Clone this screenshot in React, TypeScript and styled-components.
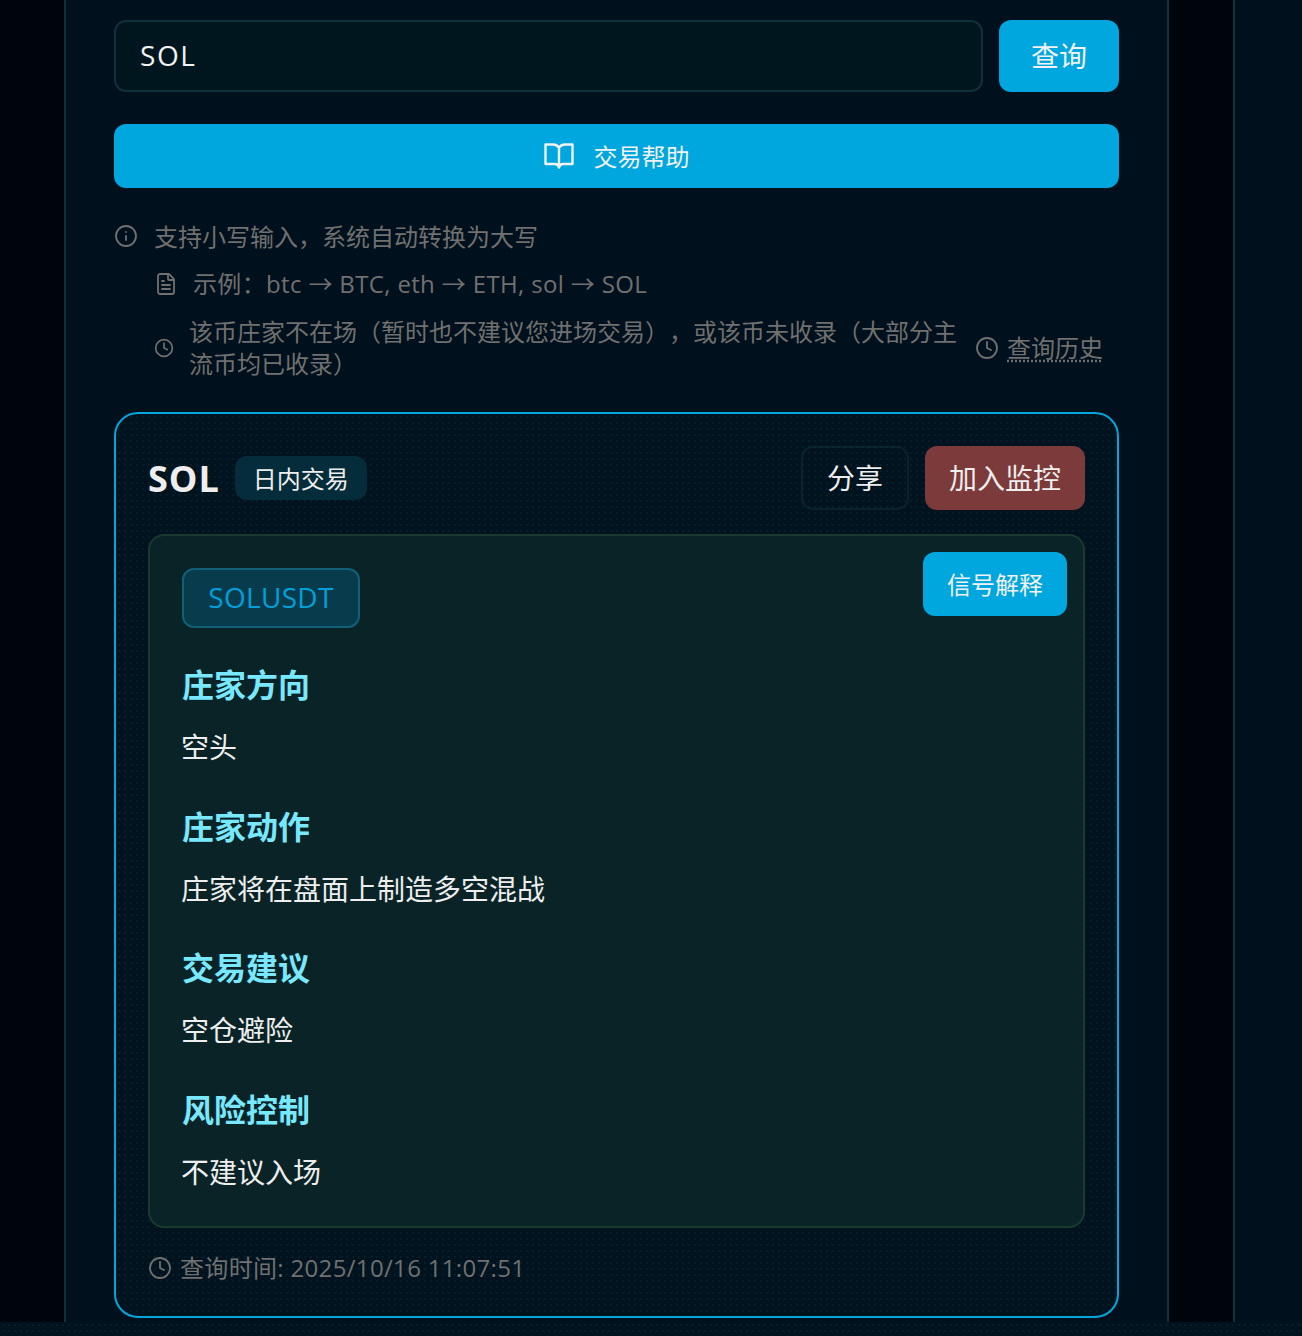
import React from "react";
import styled, { createGlobalStyle } from "styled-components";
import { Clock, FileText, Info } from "lucide-react";

const sections = [
    { title: "庄家方向", text: "空头" },
    { title: "庄家动作", text: "庄家将在盘面上制造多空混战" },
    { title: "交易建议", text: "空仓避险" },
    { title: "风险控制", text: "不建议入场" },
];

const App = () => {
    return (
        <Page>
            <GlobalStyle />
            <Columns>
                <Gutter />
                <Main>
                    <SearchRow>
                        <SearchInput value="SOL" readOnly />
                        <SearchButton>查询</SearchButton>
                    </SearchRow>
                    <HelpButton>
                        <svg width="30" height="26" viewBox="0 0 30 26" fill="none" stroke="currentColor" strokeWidth="2.4" strokeLinejoin="round">
                            <path d="M15 4.5C13.5 2.5 11.5 1.5 9 1.5H1.5V21H11C13 21 14.5 22 15 24.5C15.5 22 17 21 19 21H28.5V1.5H21C18.5 1.5 16.5 2.5 15 4.5ZM15 4.5V24.5" />
                        </svg>
                        <span>交易帮助</span>
                    </HelpButton>
                    <Notes>
                        <FirstNote>
                            <Info size={24} strokeWidth={1.8} />
                            <span>支持小写输入，系统自动转换为大写</span>
                        </FirstNote>
                        <ExampleNote>
                            <FileText size={24} strokeWidth={1.8} />
                            <ExampleText>示例：btc → BTC, eth → ETH, sol → SOL</ExampleText>
                        </ExampleNote>
                        <StatusNote>
                            <Clock size={20} strokeWidth={2} />
                            <StatusText>
                                该币庄家不在场（暂时也不建议您进场交易），或该币未收录（大部分主流币均已收录）
                            </StatusText>
                            <HistoryLink>
                                <Clock size={24} strokeWidth={1.8} />
                                <span>查询历史</span>
                            </HistoryLink>
                        </StatusNote>
                    </Notes>
                    <ResultCard>
                        <CardHeader>
                            <CoinName>SOL</CoinName>
                            <ModeTag>日内交易</ModeTag>
                            <HeaderActions>
                                <ShareButton>分享</ShareButton>
                                <WatchButton>加入监控</WatchButton>
                            </HeaderActions>
                        </CardHeader>
                        <SignalBox>
                            <ExplainButton>信号解释</ExplainButton>
                            <PairTag>SOLUSDT</PairTag>
                            {sections.map((section) => (
                                <Section key={section.title}>
                                    <SectionTitle>{section.title}</SectionTitle>
                                    <SectionText>{section.text}</SectionText>
                                </Section>
                            ))}
                        </SignalBox>
                        <QueryTime>
                            <Clock size={24} strokeWidth={1.8} />
                            <span>查询时间: 2025/10/16 11:07:51</span>
                        </QueryTime>
                    </ResultCard>
                </Main>
                <Gutter />
                <SidePanel />
            </Columns>
            <Footer />
        </Page>
    );
};

const GlobalStyle = createGlobalStyle`
    html, body {
        margin: 0;
        padding: 0;
        background: #00101c;
    }
    * {
        box-sizing: border-box;
    }
    body, button, input {
        font-family: "Open Sans", "Noto Sans CJK SC", sans-serif;
        text-spacing-trim: space-all;
    }
`;

const dots = `radial-gradient(circle, rgba(40, 100, 110, 0.13) 0.8px, transparent 1px)`;

const Page = styled.div`
    width: 1302px;
    height: 1336px;
    overflow: hidden;
    display: flex;
    flex-direction: column;
`;

const Columns = styled.div`
    height: 1322px;
    display: flex;
    overflow: hidden;
`;

const Gutter = styled.div`
    width: 64px;
    flex: none;
    background: #00040b;
`;

const Main = styled.main`
    width: 1105px;
    flex: none;
    padding: 20px 48px 0;
    background: #00101c;
    border-left: 2px solid #12303c;
    border-right: 2px solid #12303c;
`;

const SidePanel = styled.div`
    flex: 1;
    background: #00101c;
    border-left: 2px solid #12303c;
`;

const Footer = styled.div`
    height: 14px;
    background-color: #00131e;
    background-image: ${dots};
    background-size: 6px 6px;
`;

const SearchRow = styled.div`
    display: flex;
    gap: 16px;
    height: 72px;
`;

const SearchInput = styled.input`
    flex: 1;
    min-width: 0;
    padding: 0 24px 2px;
    background: #00161f;
    border: 2px solid #12303c;
    border-radius: 12px;
    color: #f2f2f2;
    font-size: 28px;
    letter-spacing: 1.6px;
    outline: none;
`;

const BlueButton = styled.button`
    border: none;
    background: #00a6de;
    color: #f2f2f2;
    border-radius: 12px;
    padding: 0 0 2px;
`;

const SearchButton = styled(BlueButton)`
    width: 120px;
    font-size: 28px;
`;

const HelpButton = styled(BlueButton)`
    width: 100%;
    height: 64px;
    margin-top: 32px;
    display: flex;
    align-items: center;
    justify-content: center;
    gap: 20px;
    font-size: 24px;

    svg {
        margin-top: 2px;
    }
`;

const Notes = styled.div`
    margin-top: 32px;
    color: #707070;
    font-size: 24px;
    line-height: 32px;
`;

const NoteRow = styled.div`
    display: flex;
    align-items: center;
`;

const FirstNote = styled(NoteRow)`
    height: 32px;
    gap: 16px;

    span {
        padding-top: 1px;
    }
`;

const ExampleNote = styled(NoteRow)`
    height: 32px;
    margin-top: 16px;
    padding-left: 40px;
    gap: 15px;
`;

const ExampleText = styled.span`
    letter-spacing: 0.35px;
`;

const StatusNote = styled(NoteRow)`
    margin-top: 16px;
    padding-left: 40px;
    gap: 15px;
`;

const StatusText = styled.div`
    width: 771px;
    flex: none;
`;

const HistoryLink = styled.div`
    display: flex;
    align-items: center;
    gap: 8px;

    span {
        text-decoration: underline dotted;
        text-underline-offset: 3px;
    }
`;

const ResultCard = styled.section`
    height: 906px;
    margin-top: 32px;
    padding: 32px;
    border: 2px solid #00a6de;
    border-radius: 24px;
    background-color: #00131e;
    background-image: ${dots};
    background-size: 6px 6px;
`;

const CardHeader = styled.div`
    display: flex;
    align-items: center;
    height: 64px;
`;

const CoinName = styled.div`
    color: #eeeeee;
    font-size: 36px;
    font-weight: 700;
    letter-spacing: 1px;
`;

const ModeTag = styled.div`
    height: 44px;
    margin-left: 15px;
    padding: 0 18px 2px;
    display: flex;
    align-items: center;
    border-radius: 12px;
    background: #052c3a;
    color: #eeeeee;
    font-size: 24px;
`;

const HeaderActions = styled.div`
    margin-left: auto;
    display: flex;
    gap: 16px;
`;

const ShareButton = styled.button`
    width: 108px;
    height: 64px;
    padding: 0 0 2px;
    border: 2px solid rgba(18, 55, 65, 0.45);
    border-radius: 12px;
    background: transparent;
    color: #eeeeee;
    font-size: 28px;
`;

const WatchButton = styled.button`
    width: 160px;
    height: 64px;
    padding: 0 0 2px;
    border: none;
    border-radius: 12px;
    background: #7d3a3b;
    color: #eeeeee;
    font-size: 28px;
`;

const SignalBox = styled.div`
    position: relative;
    height: 694px;
    margin-top: 24px;
    padding: 32px;
    border: 2px solid #1a3a30;
    border-radius: 16px;
    background: #0a2327;
`;

const ExplainButton = styled(BlueButton)`
    position: absolute;
    top: 16px;
    right: 16px;
    width: 144px;
    height: 64px;
    font-size: 24px;
`;

const PairTag = styled.div`
    width: 178px;
    height: 60px;
    padding-bottom: 2px;
    display: flex;
    align-items: center;
    justify-content: center;
    border: 2px solid #10607a;
    border-radius: 12px;
    background: #083c4c;
    color: #00a0dc;
    font-size: 28px;
    letter-spacing: 0.3px;
`;

const Section = styled.div`
    height: 141.5px;
    padding-top: 33px;
`;

const SectionTitle = styled.div`
    color: #78e8ff;
    font-size: 32px;
    font-weight: 700;
    line-height: 48px;
`;

const SectionText = styled.div`
    margin-top: 16px;
    margin-left: -1px;
    color: #eeeeee;
    font-size: 28px;
    line-height: 44px;
`;

const QueryTime = styled.div`
    margin-top: 24px;
    display: flex;
    align-items: center;
    gap: 8px;
    color: #707070;
    font-size: 24px;
    line-height: 32px;

    span {
        letter-spacing: 0.33px;
    }
`;

export default App;
